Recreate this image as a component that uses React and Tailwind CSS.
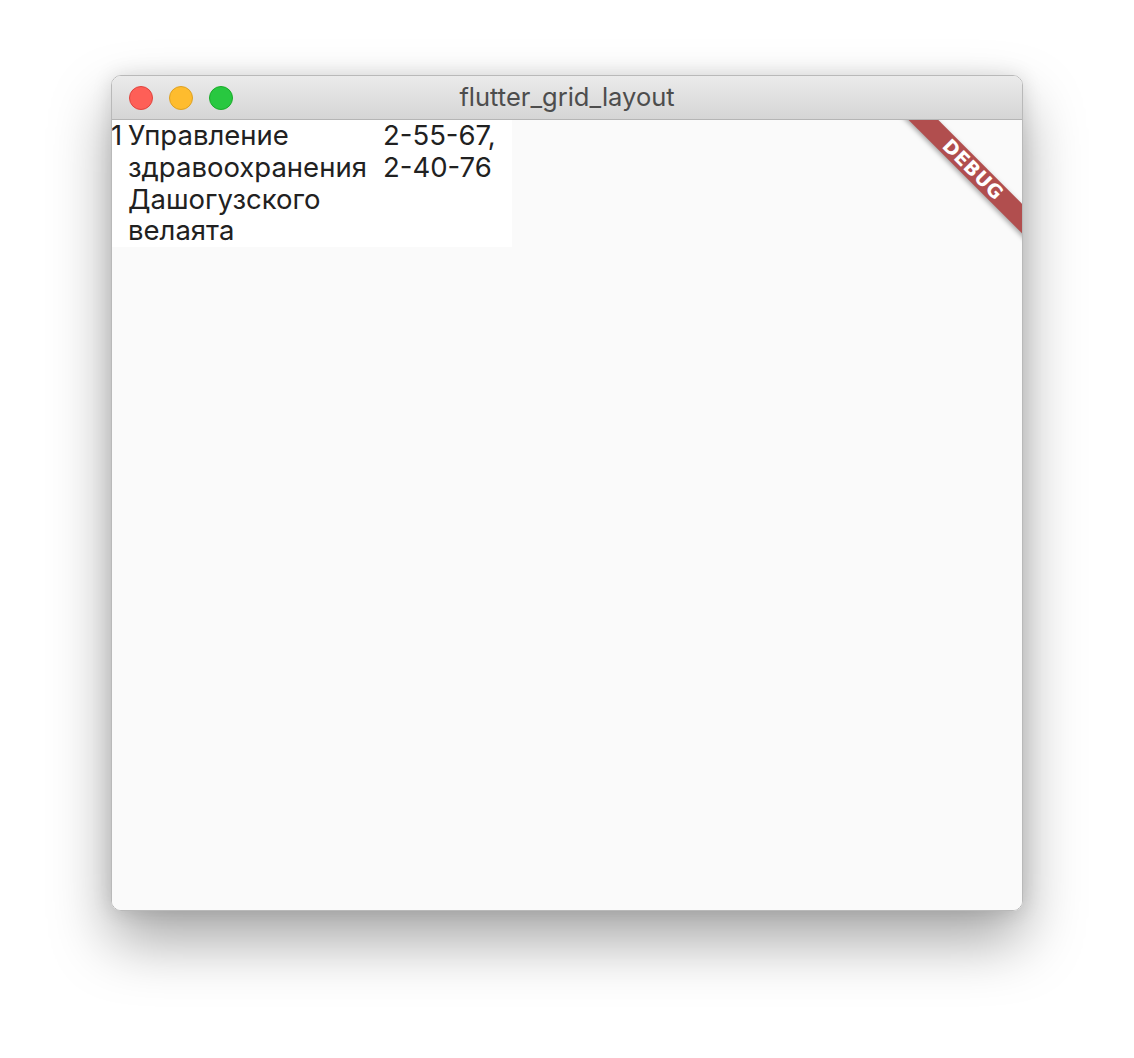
import React from "react";

const rows = [
  {
    num: "1",
    name: "Управление здравоохранения Дашогузского велаята",
    phone: "2-55-67, 2-40-76",
  },
];

const TrafficLights = () => (
  <div className="flex items-center gap-[16px] pl-[17px]">
    <span className="block w-[24px] h-[24px] rounded-full bg-[#fe5f57] border border-[#e0443e]" />
    <span className="block w-[24px] h-[24px] rounded-full bg-[#febc2e] border border-[#dea123]" />
    <span className="block w-[24px] h-[24px] rounded-full bg-[#28c840] border border-[#1aab29]" />
  </div>
);

const DebugBanner = () => (
  <div className="absolute top-0 right-0 w-[200px] h-[200px] overflow-hidden pointer-events-none">
    {/* centre of the ribbon sits 49px from the top-right corner */}
    <div className="absolute left-[51px] top-[-51px] w-[200px] h-[200px] flex items-center justify-center">
      <div className="w-[300px] h-[21px] rotate-45 bg-[#b14e4e] shadow-[0_2px_5px_rgba(0,0,0,0.35)] flex items-center justify-center">
        <span
          className="text-white text-[19px] font-extrabold tracking-[0.5px] leading-none"
          style={{ fontFamily: "'DejaVu Sans', sans-serif" }}
        >
          DEBUG
        </span>
      </div>
    </div>
  </div>
);

export default function App() {
  return (
    <div className="min-h-[1058px] bg-white pt-[75px] pl-[111px]">
      <div
        className="w-[912px] h-[836px] rounded-[10px] border border-[#b9b9b9] overflow-hidden flex flex-col shadow-[0_30px_60px_rgba(0,0,0,0.35),0_0_20px_rgba(0,0,0,0.12)]"
        style={{ fontFamily: "Inter, 'Noto Sans', sans-serif" }}
      >
        {/* title bar */}
        <div className="relative h-[44px] shrink-0 flex items-center bg-gradient-to-b from-[#ebebeb] to-[#d5d5d5] border-b border-[#b5b5b5]">
          <TrafficLights />
          <div className="absolute inset-0 flex items-center justify-center text-[25.5px] text-[#4d4d4d]">
            flutter_grid_layout
          </div>
        </div>
        {/* content */}
        <div className="relative flex-1 bg-[#fafafa]">
          <div className="w-[400px] bg-white grid grid-cols-[16px_255px_129px] text-[27.5px] leading-[31.75px] text-[#212121]">
            {rows.map((r) => (
              <React.Fragment key={r.num}>
                <div className="-ml-[1px]">{r.num}</div>
                <div>{r.name}</div>
                <div>{r.phone}</div>
              </React.Fragment>
            ))}
          </div>
          <DebugBanner />
        </div>
      </div>
    </div>
  );
}
